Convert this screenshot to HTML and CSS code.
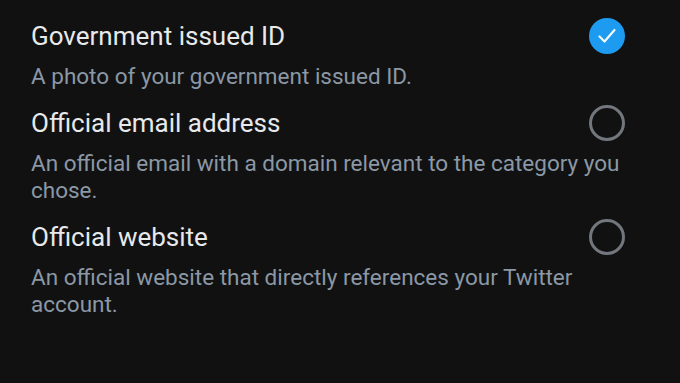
FILE: index.html
```html
<!DOCTYPE html>
<html lang="en">
<head>
<meta charset="utf-8">
<link rel="stylesheet" href="styles.css">
</head>
<body>
<main class="list">
  <div class="item">
    <div class="title">Government issued ID</div>
    <div class="control">
      <svg class="radio" viewBox="0 0 36 36" width="36" height="36">
        <circle cx="18" cy="18" r="18" fill="#1d9bf0"/>
        <path d="M10.5 18.5 L15.5 23.5 L25.5 12" fill="none" stroke="#f2f8fd" stroke-width="2.2" stroke-linecap="round" stroke-linejoin="round"/>
      </svg>
    </div>
    <div class="desc">A photo of your government issued ID.</div>
  </div>
  <div class="item">
    <div class="title">Official email address</div>
    <div class="control">
      <svg class="radio" viewBox="0 0 36 36" width="36" height="36">
        <circle cx="18" cy="18" r="16.5" fill="none" stroke="#71777c" stroke-width="3"/>
      </svg>
    </div>
    <div class="desc">An official email with a domain relevant to the category you chose.</div>
  </div>
  <div class="item">
    <div class="title">Official website</div>
    <div class="control">
      <svg class="radio" viewBox="0 0 36 36" width="36" height="36">
        <circle cx="18" cy="18" r="16.5" fill="none" stroke="#71777c" stroke-width="3"/>
      </svg>
    </div>
    <div class="desc">An official website that directly references your Twitter account.</div>
  </div>
</main>
</body>
</html>
```
FILE: styles.css
```css
html, body {
  margin: 0;
  padding: 0;
  background: #111112;
}
body {
  width: 680px;
  height: 383px;
  overflow: hidden;
  font-family: Roboto, "Noto Sans", sans-serif;
}
.list {
  display: flex;
  flex-direction: column;
  gap: 17px;
  padding: 20px 31px 0 31px;
}
.item {
  display: grid;
  grid-template-columns: 1fr auto;
  row-gap: 11px;
  align-items: center;
}
.title {
  color: #e7e9ea;
  font-size: 26px;
  line-height: 32px;
}
.desc {
  grid-column: 1 / -1;
  color: #8b98a5;
  font-size: 22.5px;
  line-height: 27px;
}
.control {
  margin: -2px 24px -2px 0;
}
.radio {
  display: block;
}
```
